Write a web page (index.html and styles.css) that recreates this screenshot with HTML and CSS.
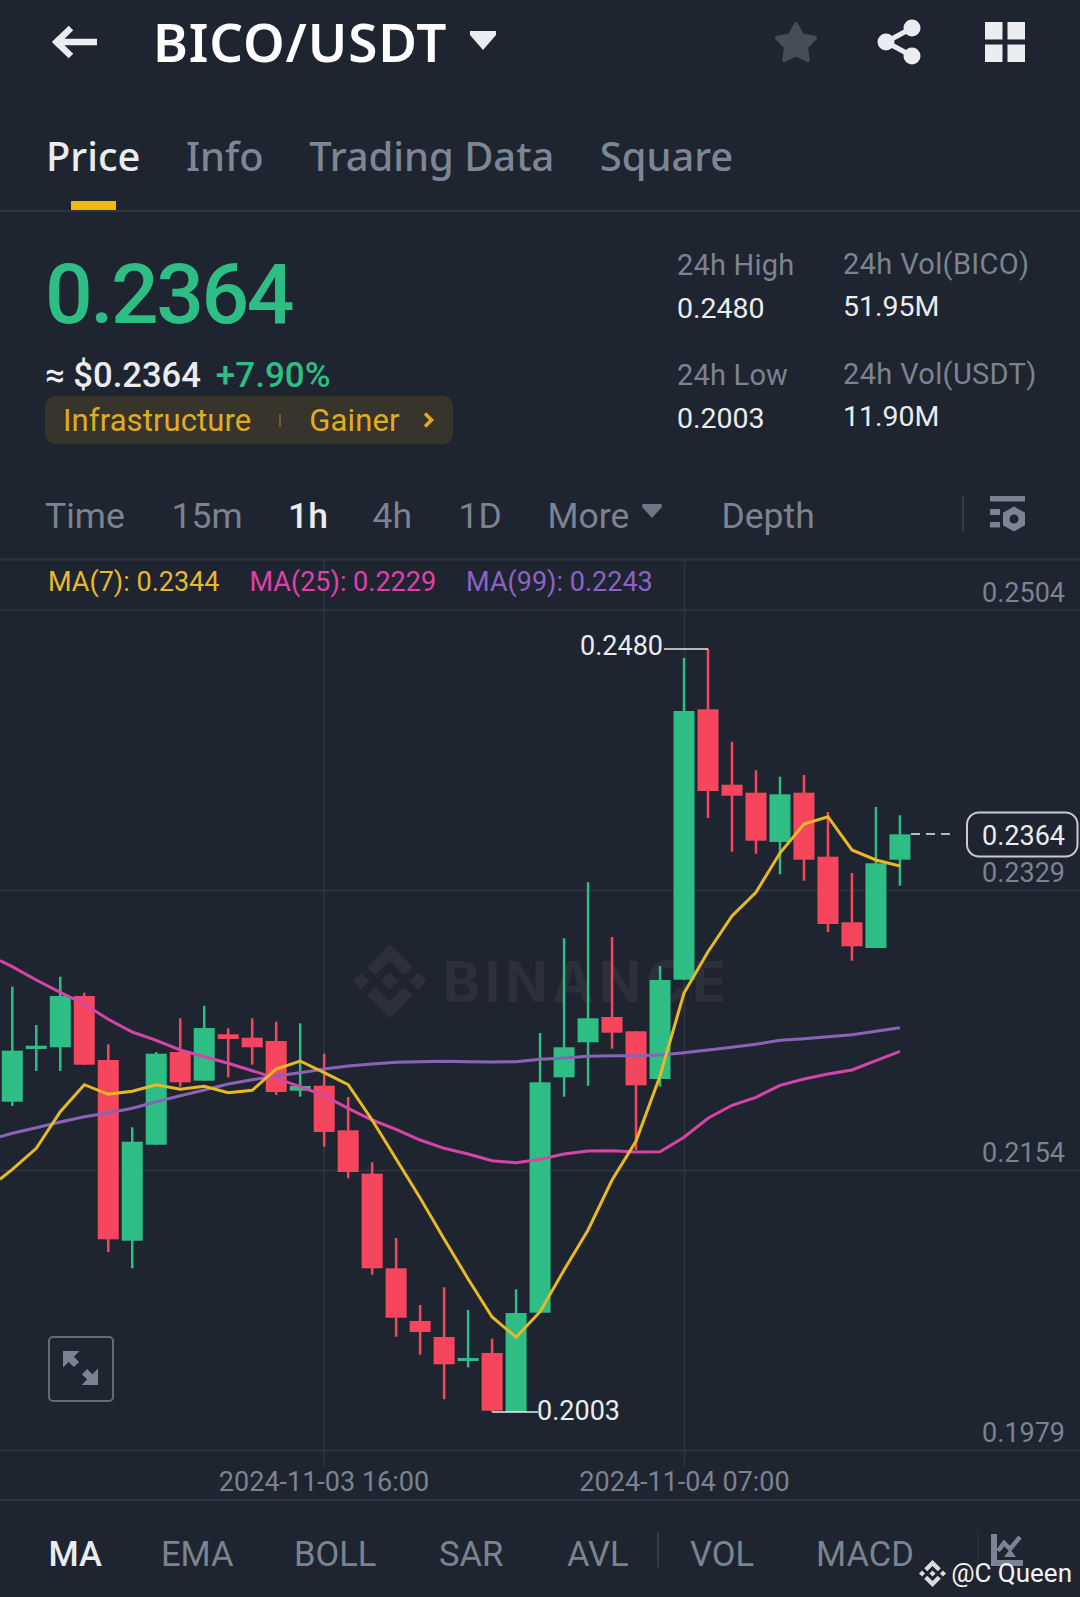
FILE: index.html
```html
<!DOCTYPE html>
<html lang="en">

<head>
    <meta charset="UTF-8">
    <meta name="viewport" content="width=device-width, initial-scale=1.0">
    <title>BICO/USDT</title>
    <link rel="stylesheet" href="styles.css">
</head>

<body>
    <div class="top_bar">
        <svg class="back_icon" viewBox="0 0 46 34">
            <path d="M45 17H6M19 3L4.500 17L19 31" fill="none" stroke="#eaecef" stroke-width="6.500"/>
        </svg>
        <h1 class="pair_name">BICO/USDT</h1>
        <svg class="pair_caret" viewBox="0 0 28 21">
            <path d="M1 1H27V5L14 20L1 5Z" fill="#eaecef"/>
        </svg>
        <svg class="star_icon" viewBox="0 0 46 46">
            <polygon points="23,5 29.200,16.500 42,18.800 33,28.200 34.800,41.200 23,35.500 11.200,41.200 13,28.200 4,18.800 16.800,16.500"
                fill="#474d57" stroke="#474d57" stroke-width="4" stroke-linejoin="round"/>
        </svg>
        <svg class="share_icon" viewBox="0 0 44 46">
            <path d="M35 9L9 23L35 37" fill="none" stroke="#eaecef" stroke-width="5"/>
            <circle cx="35" cy="9" r="8.500" fill="#eaecef"/>
            <circle cx="9" cy="23" r="8.500" fill="#eaecef"/>
            <circle cx="35" cy="37" r="8.500" fill="#eaecef"/>
        </svg>
        <svg class="grid_icon" viewBox="0 0 40 40">
            <rect x="0" y="0" width="17.500" height="17.500" fill="#eaecef"/>
            <rect x="22.500" y="0" width="17.500" height="17.500" fill="#eaecef"/>
            <rect x="0" y="22.500" width="17.500" height="17.500" fill="#eaecef"/>
            <rect x="22.500" y="22.500" width="17.500" height="17.500" fill="#eaecef"/>
        </svg>
    </div>

    <div class="tab_row">
        <div class="tab tab_active">Price</div>
        <div class="tab">Info</div>
        <div class="tab">Trading Data</div>
        <div class="tab">Square</div>
    </div>

    <div class="price_section">
        <div class="price_left">
            <div class="big_price">0.2364</div>
            <div class="approx_row">
                <span class="approx_value">≈ $0.2364</span>
                <span class="approx_change">+7.90%</span>
            </div>
            <div class="tag_box">
                <span>Infrastructure</span>
                <span class="tag_sep"></span>
                <span>Gainer</span>
                <svg class="tag_chevron" viewBox="0 0 11 16">
                    <path d="M2 1.500L8.500 8L2 14.500" fill="none" stroke="#e0ad1e" stroke-width="3.500"/>
                </svg>
            </div>
        </div>
        <div class="stats">
            <div class="stat_col">
                <div class="stat_label">24h High</div>
                <div class="stat_value">0.2480</div>
                <div class="stat_label stat_lower">24h Low</div>
                <div class="stat_value">0.2003</div>
            </div>
            <div class="stat_col stat_col_right">
                <div class="stat_label">24h Vol(BICO)</div>
                <div class="stat_value">51.95M</div>
                <div class="stat_label stat_lower">24h Vol(USDT)</div>
                <div class="stat_value">11.90M</div>
            </div>
        </div>
    </div>

    <div class="time_row">
        <span>Time</span>
        <span>15m</span>
        <span class="time_active">1h</span>
        <span>4h</span>
        <span>1D</span>
        <span class="time_more">More
            <svg class="more_caret" viewBox="0 0 18 13">
                <path d="M0 0H18V3L9 13L0 3Z" fill="#6f7785"/>
            </svg>
        </span>
        <span>Depth</span>
        <div class="time_tools">
            <span class="tools_sep"></span>
            <svg class="tools_icon" viewBox="0 0 36 38">
                <rect x="0" y="1" width="35" height="5.500" fill="#7b8494"/>
                <rect x="0" y="14" width="10" height="6" fill="#7b8494"/>
                <rect x="0" y="27" width="10" height="5.500" fill="#7b8494"/>
                <polygon points="24,11.500 35,17.800 35,30.200 24,36.500 13,30.200 13,17.800" fill="#7b8494"/>
                <circle cx="24" cy="24" r="4.500" fill="#1f2530"/>
            </svg>
        </div>
    </div>

    <div class="chart_area">
        <!-- the viewBox uses page coordinates so the numbers read straight off the screenshot -->
        <svg id="chart" class="chart_svg" viewBox="0 561 1080 938">
            <g class="grid_lines">
                <line x1="0" y1="610" x2="1080" y2="610"/>
                <line x1="0" y1="890.500" x2="1080" y2="890.500"/>
                <line x1="0" y1="1170.500" x2="1080" y2="1170.500"/>
                <line x1="0" y1="1450.500" x2="1080" y2="1450.500"/>
                <line x1="324" y1="561" x2="324" y2="1467"/>
                <line x1="684.500" y1="561" x2="684.500" y2="1467"/>
            </g>

            <!-- watermark -->
            <g transform="translate(352.500 944) scale(0.585)" fill="#2b303a">
                <path d="M38.730 53.200l24.590-24.580 24.600 24.600 14.300-14.310L63.320 0 24.420 38.900zM0 63.310l14.300-14.310 14.310 14.310-14.310 14.300zM38.730 73.410l24.590 24.590 24.600-24.600 14.310 14.290-38.900 38.910-38.910-38.880-.02-.02zM97.990 63.310l14.300-14.300 14.320 14.300-14.310 14.320zM77.830 63.300L63.320 48.780 52.590 59.510l-1.240 1.230-2.540 2.540 14.510 14.500 14.510-14.470z"/>
            </g>
            <text class="watermark_text" x="443" y="1001.500" textLength="283" lengthAdjust="spacing">BINANCE</text>

            <g id="candles"></g>
            <g id="ma_lines"></g>

            <text class="axis_label" x="1065" y="602" text-anchor="end">0.2504</text>
            <text class="axis_label" x="1065" y="882" text-anchor="end">0.2329</text>
            <text class="axis_label" x="1065" y="1162" text-anchor="end">0.2154</text>
            <text class="axis_label" x="1065" y="1442" text-anchor="end">0.1979</text>

            <text class="axis_label" x="324" y="1491" text-anchor="middle">2024-11-03 16:00</text>
            <text class="axis_label" x="684.500" y="1491" text-anchor="middle">2024-11-04 07:00</text>

            <!-- high / low markers -->
            <path class="marker_line" d="M664 649H708"/>
            <text class="marker_text" x="663" y="655" text-anchor="end">0.2480</text>
            <path class="marker_line" d="M492.500 1412H538"/>
            <text class="marker_text" x="537" y="1419.500">0.2003</text>

            <!-- current price -->
            <line class="last_dash" x1="911" y1="834" x2="953" y2="834"/>
            <rect class="last_box" x="967" y="812.500" width="110.500" height="44" rx="12"/>
            <text class="marker_text" x="982" y="845">0.2364</text>
        </svg>

        <div class="ma_legend">
            <span class="ma_seven">MA(7): 0.2344</span>
            <span class="ma_twentyfive">MA(25): 0.2229</span>
            <span class="ma_ninetynine">MA(99): 0.2243</span>
        </div>

        <div class="expand_btn">
            <svg viewBox="0 0 38 38">
                <path d="M0 0H17.500L11.500 6L17 11.500L11.500 17L6 11.500L0 17.500Z" fill="#7b8290"/>
                <path d="M37 36H19.500L25.500 30L20 24.500L25.500 19L31 24.500L37 18.500Z" fill="#7b8290"/>
            </svg>
        </div>
    </div>

    <div class="bottom_bar">
        <span class="bottom_active">MA</span>
        <span>EMA</span>
        <span>BOLL</span>
        <span>SAR</span>
        <span>AVL</span>
        <span class="bottom_sep"></span>
        <span>VOL</span>
        <span>MACD</span>
        <span class="bottom_sep bottom_sep_faint"></span>
        <svg class="bottom_icon" viewBox="0 0 32 32">
            <path d="M3 0V29H32" fill="none" stroke="#7b8494" stroke-width="6"/>
            <path d="M7 17L13 9L19 15L29 3" fill="none" stroke="#7b8494" stroke-width="4.500"/>
            <polygon points="13,23 19,15 25,23" fill="#7b8494"/>
        </svg>

        <!-- share watermark on top of the screenshot -->
        <div class="user_mark">
            <svg class="user_logo" viewBox="0 0 126.610 126.610">
                <path d="M38.730 53.200l24.590-24.580 24.600 24.600 14.300-14.310L63.320 0 24.420 38.900zM0 63.310l14.300-14.310 14.310 14.310-14.310 14.300zM38.730 73.410l24.590 24.590 24.600-24.600 14.310 14.290-38.900 38.910-38.910-38.880-.02-.02zM97.990 63.310l14.300-14.300 14.320 14.300-14.310 14.320zM77.830 63.300L63.320 48.780 52.590 59.510l-1.240 1.230-2.540 2.540 14.510 14.500 14.510-14.470z" fill="#dcdcdc"/>
            </svg>
            <span>@C Queen</span>
        </div>
    </div>

    <script src="chart.js"></script>
</body>

</html>
```

FILE: styles.css
```css
* {
    margin: 0;
    padding: 0;
    box-sizing: border-box;
}

body {
    width: 1080px;
    height: 1597px;
    overflow: hidden;
    background-color: #1f2530;
    color: #7b8390;
    font-family: Roboto, "Noto Sans", sans-serif;
}

svg {
    display: block;
    flex-shrink: 0;
}

/* top bar */
.top_bar {
    height: 84px;
    display: flex;
    align-items: center;
    padding-left: 52px;
}

.back_icon {
    width: 46px;
    height: 34px;
}

.pair_name {
    margin-left: 55px;
    font-family: "Noto Sans", sans-serif;
    font-size: 53px;
    font-weight: 600;
    line-height: 84px;
    letter-spacing: 0.9px;
    color: #fff;
}

.pair_caret {
    width: 28px;
    height: 21px;
    margin-left: 22px;
    margin-bottom: 4px;
}

.star_icon {
    width: 46px;
    height: 46px;
    margin-left: 276px;
}

.share_icon {
    width: 44px;
    height: 46px;
    margin-left: 58px;
}

.grid_icon {
    width: 40px;
    height: 40px;
    margin-left: 64px;
}

/* tabs */
.tab_row {
    height: 128px;
    display: flex;
    gap: 45.500px;
    padding-left: 46px;
    padding-top: 44px;
    border-bottom: 2px solid #2f3541;
}

.tab {
    position: relative;
    height: 82px;
    font-family: "Noto Sans", sans-serif;
    font-size: 39.900px;
    font-weight: 500;
    line-height: 56px;
    color: #7d8694;
}

.tab_active {
    color: #eaecef;
}

.tab_active::after {
    content: "";
    position: absolute;
    left: 25px;
    bottom: 0;
    width: 45px;
    height: 9px;
    background-color: #f0b90b;
}

/* price block */
.price_section {
    height: 258px;
    display: flex;
}

.price_left {
    width: 677px;
    padding-left: 45px;
    padding-top: 41px;
}

.big_price {
    font-size: 84px;
    font-weight: 500;
    line-height: 84px;
    letter-spacing: -2.500px;
    color: #2ebd85;
}

.approx_row {
    margin-top: 18px;
    display: flex;
    align-items: baseline;
    line-height: 40px;
}

.approx_value {
    font-size: 34.600px;
    font-weight: 500;
    color: #eaecef;
}

.approx_change {
    margin-left: 15px;
    font-size: 35px;
    font-weight: 500;
    color: #2ebd85;
}

.tag_box {
    width: 408px;
    height: 48px;
    padding-left: 18px;
    display: flex;
    align-items: center;
    border-radius: 10px;
    background-color: #37342b;
    font-size: 31px;
    letter-spacing: 0.1px;
    color: #e0ad1e;
}

.tag_sep {
    width: 2px;
    height: 13px;
    margin: 0 28px 0 28px;
    background-color: #6b5d28;
}

.tag_chevron {
    width: 11px;
    height: 16px;
    margin-left: 23px;
}

.stats {
    display: flex;
    padding-top: 36px;
}

.stat_col {
    width: 166px;
}

.stat_col_right {
    margin-top: -1px;
}

.stat_label {
    font-size: 29px;
    line-height: 34px;
    letter-spacing: 0.2px;
    white-space: nowrap;
}

.stat_col_right .stat_label {
    letter-spacing: 0.35px;
}

.stat_value {
    margin-top: 10px;
    font-size: 28.500px;
    line-height: 34px;
    color: #eaecef;
}

.stat_col_right .stat_value {
    margin-top: 9px;
}

.stat_col .stat_lower {
    margin-top: 32px;
}

.stat_col_right .stat_lower {
    margin-top: 33px;
}

/* timeframes */
.time_row {
    height: 91px;
    display: grid;
    grid-template-columns: 126.500px 116.500px 84.500px 86px 89px 174px 240px 1fr;
    align-items: center;
    padding-left: 45px;
    padding-top: 2px;
    border-bottom: 3px solid #2a303b;
    font-size: 35.500px;
    line-height: 88px;
}

.time_active {
    font-weight: 500;
    color: #eaecef;
}

.time_more {
    display: flex;
    align-items: center;
}

.more_caret {
    width: 20px;
    height: 14px;
    margin-left: 13px;
    margin-bottom: 10px;
}

.time_tools {
    display: flex;
    align-items: center;
    margin-bottom: 4px;
}

.tools_sep {
    width: 2px;
    height: 36px;
    background-color: #323946;
}

.tools_icon {
    width: 36px;
    height: 38px;
    margin-left: 26px;
}

/* chart */
.chart_area {
    position: relative;
    height: 938px;
}

.chart_svg {
    position: absolute;
    top: 0;
    left: 0;
    width: 1080px;
    height: 938px;
}

.grid_lines line {
    stroke: #2f3541;
    stroke-width: 1.500;
}

.watermark_text {
    font-family: Inter, sans-serif;
    font-size: 56px;
    font-weight: 700;
    fill: #2b303a;
}

.axis_label {
    font-family: Roboto, sans-serif;
    font-size: 27px;
    fill: #7b8390;
}

.marker_text {
    font-family: Roboto, sans-serif;
    font-size: 27px;
    fill: #eaecef;
}

.marker_line {
    fill: none;
    stroke: #eaecef;
    stroke-width: 1.500;
}

.last_dash {
    stroke: #eaecef;
    stroke-width: 1.500;
    stroke-dasharray: 9 6;
}

.last_box {
    fill: #1f2530;
    stroke: #c6cad1;
    stroke-width: 2;
}

.ma_legend {
    position: relative;
    display: flex;
    gap: 30px;
    padding-left: 48px;
    padding-top: 4px;
    font-size: 27px;
    line-height: 34px;
}

.ma_seven {
    color: #e8b92e;
}

.ma_twentyfive {
    color: #e040ab;
}

.ma_ninetynine {
    color: #8b63c6;
}

.expand_btn {
    position: absolute;
    left: 48px;
    top: 775px;
    width: 66px;
    height: 66px;
    padding: 13px;
    border: 2px solid #636b79;
    border-radius: 5px;
}

/* indicators */
.bottom_bar {
    position: relative;
    height: 98px;
    display: grid;
    grid-template-columns: 112.500px 133px 145px 128px 90px 33px 126px 161px 14px 32px;
    padding-left: 48.500px;
    padding-top: 33px;
    border-top: 2px solid #2f3541;
    font-size: 34.500px;
    line-height: 40px;
}

.bottom_active {
    font-weight: 500;
    color: #eaecef;
}

.bottom_sep {
    width: 2px;
    height: 35px;
    margin-top: -2px;
    background-color: #323946;
}

.bottom_sep_faint {
    background-color: #272d38;
}

.bottom_icon {
    width: 32px;
    height: 32px;
}

.user_mark {
    position: absolute;
    right: 8px;
    top: 56px;
    display: flex;
    align-items: center;
    gap: 5px;
    font-family: Roboto, sans-serif;
    font-size: 26px;
    line-height: 32px;
    color: #f2f2f2;
}

.user_logo {
    width: 27px;
    height: 27px;
}
```

FILE: chart.js
```js
// candle data read off the chart
// each row is [wick top, body top, body bottom, wick bottom, colour]
const candles = [
    [986.7, 1050.7, 1101.7, 1106, "g"],
    [1025, 1045.7, 1049, 1071, "g"],
    [976.7, 996, 1047.3, 1071, "g"],
    [992.7, 996, 1064.7, 1064.7, "r"],
    [1044.3, 1060, 1239.3, 1252, "r"],
    [1127.3, 1141.7, 1240.7, 1268.3, "g"],
    [1052, 1053.7, 1144.7, 1144.7, "g"],
    [1018.3, 1052, 1082.3, 1086.7, "r"],
    [1005.7, 1028, 1080.7, 1080.7, "g"],
    [1028.3, 1034.3, 1039, 1077.3, "r"],
    [1018.3, 1037.7, 1047.3, 1064.7, "r"],
    [1021.7, 1041, 1092, 1095, "r"],
    [1023.3, 1086, 1090.7, 1096.7, "g"],
    [1053.7, 1085.7, 1132, 1146.7, "r"],
    [1097, 1130.3, 1172, 1178.3, "r"],
    [1162.3, 1173.7, 1268.3, 1274.7, "r"],
    [1238, 1268.3, 1317.7, 1336.7, "r"],
    [1305, 1321, 1332, 1354.7, "r"],
    [1287.3, 1337, 1364.3, 1399.3, "r"],
    [1310, 1358, 1361, 1367.3, "g"],
    [1338.7, 1353, 1410.7, 1412.3, "r"],
    [1289.3, 1313, 1412, 1412, "g"],
    [1033, 1082.3, 1312.7, 1312.7, "g"],
    [938.3, 1047.3, 1077.3, 1096.7, "g"],
    [882.3, 1018.3, 1042.3, 1085.7, "g"],
    [937, 1017, 1032.7, 1048.7, "r"],
    [1031.3, 1031.3, 1085.3, 1150, "r"],
    [966, 980, 1079, 1086.7, "g"],
    [658, 711, 979.7, 979.7, "g"],
    [648.7, 709.3, 791, 818, "r"],
    [741.7, 784.7, 795.7, 851.7, "r"],
    [770.3, 792.7, 840.7, 853.7, "r"],
    [776.7, 794.3, 842, 874.3, "g"],
    [775, 792.7, 859.7, 880.7, "r"],
    [812, 856.7, 924, 932, "r"],
    [873, 922.3, 946.3, 960.7, "r"],
    [807, 863.3, 948, 948, "g"],
    [815.3, 834.3, 859.7, 885.7, "g"]
];

// moving averages, one y value per candle, the first value is the left edge of the chart
const ma_data = [
    {
        colour: "#8a63b8",
        values: [1136.7, 1133.3, 1127.7, 1122, 1116.7, 1113, 1108.3, 1101.7, 1095.7, 1090, 1084, 1079.7, 1076, 1072.7, 1069, 1066, 1064, 1062.3, 1061.7, 1061.3, 1061.7, 1062, 1061.7, 1059.3, 1058, 1056.3, 1055.7, 1055.7, 1055, 1052.7, 1050, 1047.3, 1044.3, 1040.3, 1038.7, 1036.7, 1034.7, 1031.3, 1027.7]
    },
    {
        colour: "#d545a8",
        values: [960.7, 966.7, 980, 992.3, 1004, 1019.3, 1032, 1040.3, 1050, 1056.7, 1063.3, 1070.7, 1078.3, 1086.7, 1095.7, 1108.3, 1120, 1129.3, 1140, 1148.3, 1154, 1160.7, 1162.7, 1159.3, 1154, 1151, 1150.7, 1152, 1151.7, 1137.3, 1118.3, 1105.3, 1097.3, 1085.3, 1079, 1074, 1070, 1060.7, 1051.3]
    },
    {
        colour: "#e8b924",
        values: [1179.3, 1169.3, 1148.3, 1111.7, 1084.7, 1094.3, 1091.3, 1084.7, 1089.3, 1086.3, 1092.7, 1090.3, 1069, 1061, 1072.7, 1084.7, 1120, 1159, 1198, 1239, 1279, 1317, 1337.3, 1311.7, 1270, 1230, 1180, 1141, 1076, 993, 951.7, 916, 892.3, 853, 824, 816.7, 850, 860, 866]
    }
];

const svg_ns = "http://www.w3.org/2000/svg";
const candle_group = document.getElementById("candles");
const ma_group = document.getElementById("ma_lines");

const candle_x = (i) => 12.3 + 23.99 * i;
const body_width = 21;

function add_rect(x, y, width, height, colour) {
    const rect = document.createElementNS(svg_ns, "rect");
    rect.setAttribute("x", x);
    rect.setAttribute("y", y);
    rect.setAttribute("width", width);
    rect.setAttribute("height", height);
    rect.setAttribute("fill", colour);
    candle_group.appendChild(rect);
}

candles.forEach((candle, i) => {
    const [wick_top, body_top, body_bottom, wick_bottom, type] = candle;
    const colour = type === "g" ? "#2ebd85" : "#f6465d";
    const x = candle_x(i);

    add_rect(x - 1.25, wick_top, 2.5, wick_bottom - wick_top, colour);
    add_rect(x - body_width / 2, body_top, body_width, body_bottom - body_top, colour);
});

for (const ma of ma_data) {
    const points = ma.values.map((y, i) => (i === 0 ? 0 : candle_x(i - 1)) + "," + y);
    const line = document.createElementNS(svg_ns, "polyline");
    line.setAttribute("points", points.join(" "));
    line.setAttribute("fill", "none");
    line.setAttribute("stroke", ma.colour);
    line.setAttribute("stroke-width", 3);
    ma_group.appendChild(line);
}
```
